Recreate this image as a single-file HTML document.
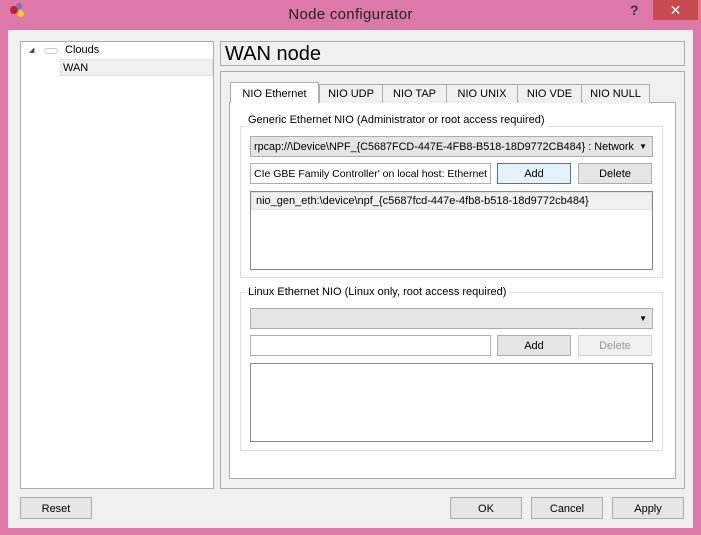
<!DOCTYPE html>
<html><head><meta charset="utf-8"><style>
*{box-sizing:border-box;margin:0;padding:0}
body{width:701px;height:535px;background:#dd79a8;position:relative;overflow:hidden;font-family:"Liberation Sans",sans-serif;font-size:11px;color:#000}
.a{position:absolute}
.btn{position:absolute;background:#e5e5e5;border:1px solid #acacac;display:flex;align-items:center;justify-content:center;font-size:11px;padding-top:1px}
.edit{position:absolute;background:#fff;border:1px solid #abadb3;display:flex;align-items:center;padding-left:3px;padding-top:1px;white-space:nowrap;overflow:hidden}
.tab{position:absolute;top:84px;height:19px;background:#f0f0f0;border:1px solid #acacac;border-bottom:none;text-align:center;line-height:19px;font-size:11px}
.grp{position:absolute;border:1px solid #dcdcdc}
.gt{position:absolute;background:#fff;padding:0 2px;font-size:11px;line-height:13px}
</style></head><body>
<div class="a" style="left:10px;top:6px;width:8px;height:8px;border-radius:50%;background:#c02030"></div>
<div class="a" style="left:16px;top:3px;width:6px;height:6px;border-radius:50%;background:#8070c0"></div>
<div class="a" style="left:17px;top:10px;width:7px;height:7px;border-radius:50%;background:#f0d020"></div>
<div class="a" style="left:0;top:6px;width:701px;text-align:center;font-size:15px;color:#222;letter-spacing:0.3px">Node configurator</div>
<div class="a" style="left:630px;top:2px;font-size:14px;font-weight:bold;color:#333">?</div>
<div class="a" style="left:653px;top:0;width:45px;height:20px;background:#c74c50;color:#fff;text-align:center;font-size:14px;line-height:20px">✕</div>

<div class="a" style="left:8px;top:30px;width:685px;height:498px;background:#f0f0f0"></div>

<div class="a" style="left:20px;top:41px;width:194px;height:448px;background:#fff;border:1px solid #acacac"></div>
<div class="a" style="left:29px;top:46px;font-size:7px;color:#444">◢</div>
<div class="a" style="left:44px;top:48px;width:14px;height:6px;border:1px solid #ccc;border-radius:4px"></div>
<div class="a" style="left:65px;top:44px;font-size:11px">Clouds</div>
<div class="a" style="left:60px;top:59px;width:153px;height:17px;background:#f0f0f0;border:1px solid #e2e2e2;padding-left:2px;line-height:16px">WAN</div>

<div class="a" style="left:220px;top:41px;width:465px;height:25px;border:1px solid #acacac;background:#f0f0f0;font-size:20px;line-height:25px;padding-left:4px">WAN node</div>
<div class="a" style="left:220px;top:71px;width:465px;height:418px;border:1px solid #acacac;background:#f0f0f0"></div>

<div class="a" style="left:229px;top:102px;width:447px;height:377px;background:#fff;border:1px solid #acacac"></div>
<div class="tab" style="left:319px;width:64px">NIO UDP</div>
<div class="tab" style="left:382px;width:65px">NIO TAP</div>
<div class="tab" style="left:446px;width:72px">NIO UNIX</div>
<div class="tab" style="left:517px;width:65px">NIO VDE</div>
<div class="tab" style="left:581px;width:69px">NIO NULL</div>
<div class="tab" style="left:230px;top:82px;width:89px;height:21px;background:#fff;line-height:22px">NIO Ethernet</div>

<div class="grp" style="left:240px;top:126px;width:423px;height:152px"></div>
<div class="gt" style="left:246px;top:114px">Generic Ethernet NIO (Administrator or root access required)</div>
<div class="edit" style="left:250px;top:136px;width:403px;height:21px;background:#e5e5e5;border-color:#acacac;font-size:10.8px">rpcap://\Device\NPF_{C5687FCD-447E-4FB8-B518-18D9772CB484} : Network<span class="a" style="right:5px;top:5px;font-size:8px">▼</span></div>
<div class="edit" style="left:250px;top:163px;width:241px;height:21px;font-size:10.5px">CIe GBE Family Controller' on local host: Ethernet</div>
<div class="btn" style="left:497px;top:163px;width:74px;height:21px;border-color:#3c7fb1;background:#e5f1fb">Add</div>
<div class="btn" style="left:578px;top:163px;width:74px;height:21px">Delete</div>
<div class="a" style="left:250px;top:191px;width:403px;height:79px;background:#fff;border:1px solid #828790"></div>
<div class="a" style="left:251px;top:192px;width:401px;height:18px;background:#f0f0f0;border:1px solid #e2e2e2;padding-left:4px;line-height:17px">nio_gen_eth:\device\npf_{c5687fcd-447e-4fb8-b518-18d9772cb484}</div>

<div class="grp" style="left:240px;top:292px;width:423px;height:159px"></div>
<div class="gt" style="left:246px;top:286px">Linux Ethernet NIO (Linux only, root access required)</div>
<div class="edit" style="left:250px;top:308px;width:403px;height:21px;background:#e5e5e5;border-color:#acacac"><span class="a" style="right:5px;top:5px;font-size:8px">▼</span></div>
<div class="edit" style="left:250px;top:335px;width:241px;height:21px"></div>
<div class="btn" style="left:497px;top:335px;width:74px;height:21px">Add</div>
<div class="btn" style="left:578px;top:335px;width:74px;height:21px;background:#f0f0f0;border-color:#d0d0d0;color:#999">Delete</div>
<div class="a" style="left:250px;top:363px;width:403px;height:79px;background:#fff;border:1px solid #828790"></div>

<div class="btn" style="left:20px;top:497px;width:72px;height:22px">Reset</div>
<div class="btn" style="left:450px;top:497px;width:72px;height:22px">OK</div>
<div class="btn" style="left:531px;top:497px;width:72px;height:22px">Cancel</div>
<div class="btn" style="left:612px;top:497px;width:72px;height:22px">Apply</div>
</body></html>
